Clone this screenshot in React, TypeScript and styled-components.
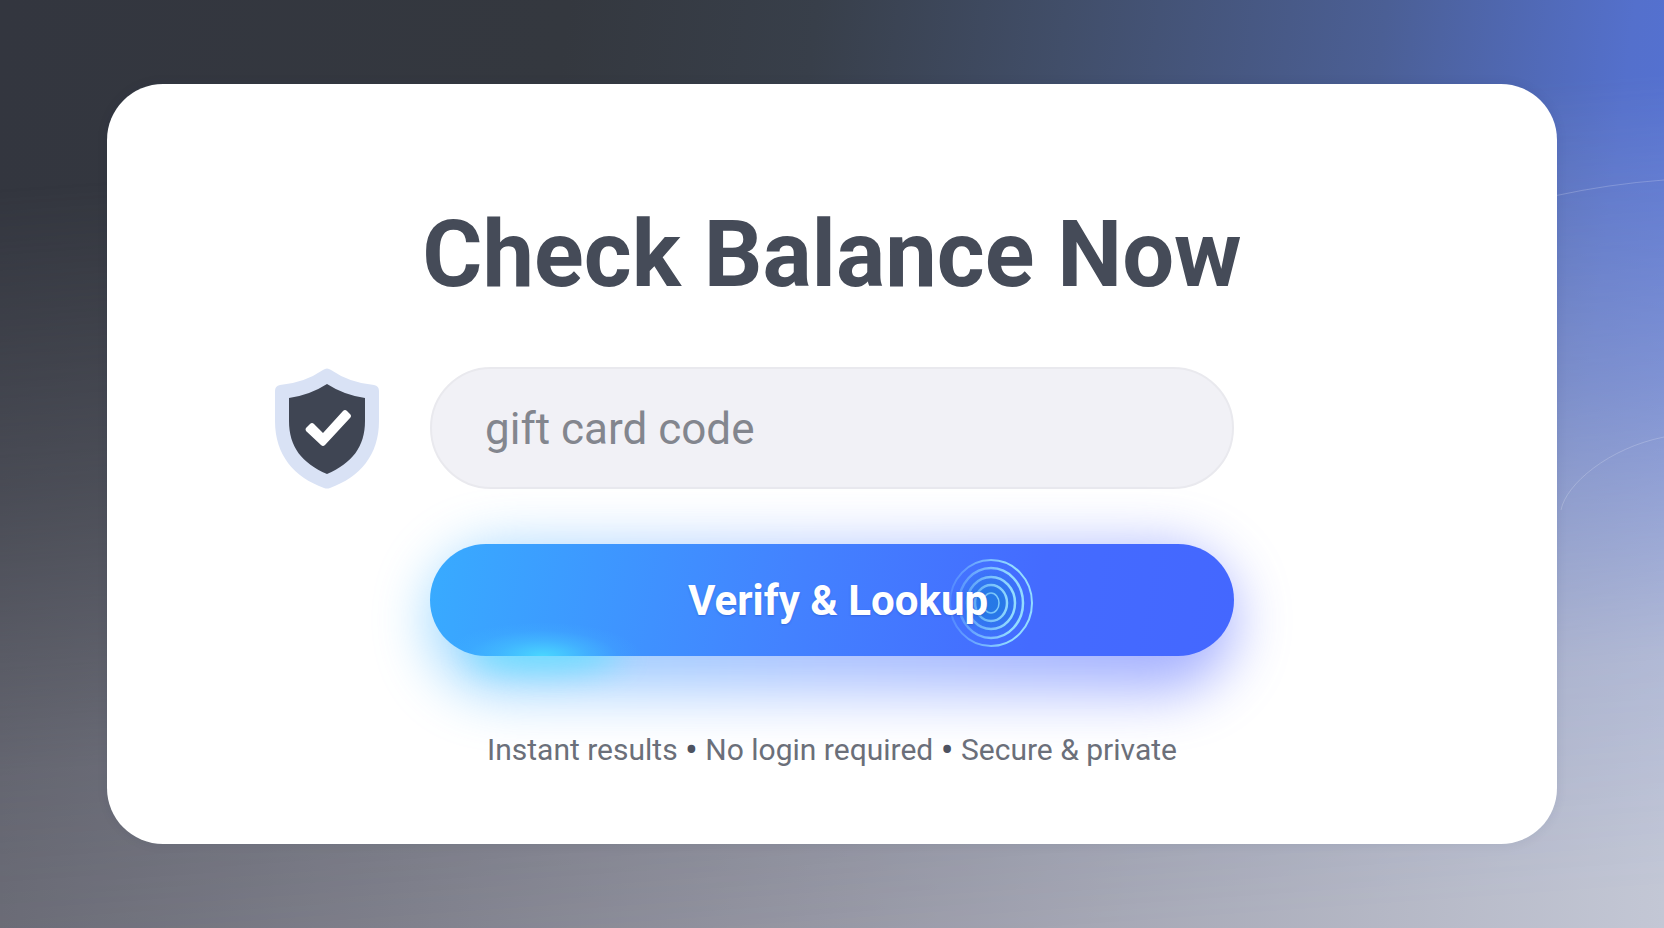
import React from 'react';
import styled, { createGlobalStyle } from 'styled-components';

const GlobalStyle = createGlobalStyle`
  *, *::before, *::after { box-sizing: border-box; }
  body { margin: 0; font-family: Roboto, "Liberation Sans", sans-serif; }
`;

const Page = styled.div`
  position: relative;
  isolation: isolate;
  overflow: hidden;
  min-height: 100vh;
  display: flex;
  align-items: center;
  padding: 84px 107px;
  background: linear-gradient(97deg, #33363f 0%, #34383f 32%, #383f4a 46%, #414e69 60%, #4b5f95 78%, #5470cc 92%, #5573da 100%);

  &::before {
    content: '';
    position: absolute;
    inset: 0;
    z-index: -1;
    background: linear-gradient(90deg, #6e6f7a 0%, #9899a6 50%, #c3c7d5 100%);
    mask-image: linear-gradient(176deg, transparent 18%, rgba(0, 0, 0, 0.38) 47%, rgba(0, 0, 0, 0.84) 74%, #000 96%);
  }
`;

const Arcs = styled.svg`
  position: absolute;
  z-index: -1;
  top: 0;
  right: 0;
  width: 200px;
  height: 560px;
`;

const Card = styled.main`
  flex: 1;
  display: flex;
  flex-direction: column;
  align-items: center;
  padding: 115px 40px 74px;
  border-radius: 56px;
  background: #fff;
  box-shadow: 0 0 12px rgba(30, 40, 90, 0.08);
`;

const Title = styled.h1`
  margin: 0 0 56px;
  font-size: 92px;
  line-height: 112px;
  font-weight: 700;
  color: #454b58;
`;

const Form = styled.form`
  align-self: stretch;
  display: grid;
  grid-template-columns: 1fr minmax(0, 804px) 1fr;
  column-gap: 51px;
  row-gap: 55px;
  align-items: center;
`;

const Shield = styled.svg`
  justify-self: end;
  width: 104px;
  height: 122px;
`;

const CodeInput = styled.input`
  width: 100%;
  height: 122px;
  padding: 2px 53px 0;
  border: 2px solid #e9e9ee;
  border-radius: 61px;
  outline: none;
  background: #f1f1f6;
  font: 400 44px Roboto, "Liberation Sans", sans-serif;
  color: #454b58;

  &::placeholder { color: #83868e; opacity: 1; }
`;

const ButtonWrap = styled.div`
  grid-column: 2;
  position: relative;
  isolation: isolate;

  &::before {
    content: '';
    position: absolute;
    inset: 4px 0 -36px;
    z-index: -1;
    border-radius: 72px;
    background: linear-gradient(90deg, #66c4ff, #7fa2ff 50%, #7583ff);
    filter: blur(28px);
    opacity: 0.66;
  }
`;

const VerifyButton = styled.button`
  position: relative;
  display: block;
  width: 100%;
  height: 112px;
  padding: 0 0 0 12px;
  border: 0;
  border-radius: 56px;
  background:
    radial-gradient(ellipse 100px 34px at 14% 100%, rgba(75, 220, 255, 0.9), rgba(75, 220, 255, 0.35) 45%, rgba(75, 220, 255, 0.08) 75%, rgba(75, 220, 255, 0) 100%),
    linear-gradient(100deg, #38abff 0%, #4382ff 45%, #446bff 75%, #4467ff 100%);
  color: #fff;
  font: 700 42px Roboto, "Liberation Sans", sans-serif;
  cursor: pointer;
`;

const ButtonLabel = styled.span`
  position: relative;
  text-shadow: 0 1px 2px rgba(30, 60, 160, 0.35);
`;

const Ripple = styled.svg`
  position: absolute;
  top: 13px;
  left: calc(50% + 115px);
  width: 88px;
  height: 92px;
`;

const Glow = styled.span`
  position: absolute;
  z-index: -1;
  left: 5%;
  bottom: -14px;
  width: 150px;
  height: 36px;
  border-radius: 50%;
  background: #4fe0ff;
  filter: blur(16px);
  opacity: 0.7;
`;

const Notes = styled.p`
  margin: 74px 0 0;
  font-size: 30px;
  line-height: 40px;
  color: #6b6f79;
`;

const Dot = styled.span`
  font-size: 38px;
  line-height: 0;
  vertical-align: -3px;
  color: #4d5260;
`;

const rings = [
  { rx: 41, ry: 43, width: 2 },
  { rx: 32, ry: 35, width: 2.5 },
  { rx: 24, ry: 26, width: 2.5 },
  { rx: 16, ry: 18, width: 2.5 },
  { rx: 8, ry: 10, width: 1.5 },
];

export default function App() {
  return (
    <>
      <GlobalStyle />
      <Page>
        <Arcs viewBox="0 0 200 560" fill="none" stroke="#fff" strokeOpacity="0.2" aria-hidden="true">
          <path d="M90 196Q145 184 200 180" />
          <path d="M97 510C102 484 145 448 200 437" />
        </Arcs>
        <Card>
          <Title>Check Balance Now</Title>
          <Form onSubmit={(e) => e.preventDefault()}>
            <Shield viewBox="0 0 104 122" aria-hidden="true">
              <path
                d="M48 3Q52 0 56 3Q75 16 99 18Q104 19 104 24V54C104 88 85 110 55 121Q52 122 49 121C19 110 0 88 0 54V24Q0 19 5 18Q29 16 48 3Z"
                fill="#d9e2f5"
              />
              <path d="M52 17Q69 28 90 31V54C90 80 77 96 52 107C27 96 14 80 14 54V31Q35 28 52 17Z" fill="#3f4553" />
              <path
                d="M31 61L35 57Q37 55 39 57L48 66L68 44Q70 42 72 44L75 47Q77 49 75 51L50 78Q48 80 46 78L31 64Q30 62 31 61Z"
                fill="#fff"
              />
            </Shield>
            <CodeInput type="text" placeholder="gift card code" aria-label="gift card code" />
            <ButtonWrap>
              <Glow />
              <VerifyButton type="submit">
                <Ripple viewBox="-44 -46 88 92" fill="none" aria-hidden="true">
                  <defs>
                    <linearGradient id="ring" gradientUnits="userSpaceOnUse" x1="-41" y1="0" x2="20" y2="0">
                      <stop offset="0" stopColor="#8fdcff" stopOpacity="0.2" />
                      <stop offset="1" stopColor="#93dcff" />
                    </linearGradient>
                    <radialGradient id="core">
                      <stop offset="0.3" stopColor="#1f7be0" stopOpacity="0.8" />
                      <stop offset="1" stopColor="#1f7be0" stopOpacity="0" />
                    </radialGradient>
                  </defs>
                  <circle r="36" fill="url(#core)" />
                  {rings.map((ring) => (
                    <ellipse key={ring.rx} rx={ring.rx} ry={ring.ry} stroke="url(#ring)" strokeWidth={ring.width} />
                  ))}
                </Ripple>
                <ButtonLabel>Verify &amp; Lookup</ButtonLabel>
              </VerifyButton>
            </ButtonWrap>
          </Form>
          <Notes>
            Instant results <Dot>•</Dot> No login required <Dot>•</Dot> Secure &amp; private
          </Notes>
        </Card>
      </Page>
    </>
  );
}
